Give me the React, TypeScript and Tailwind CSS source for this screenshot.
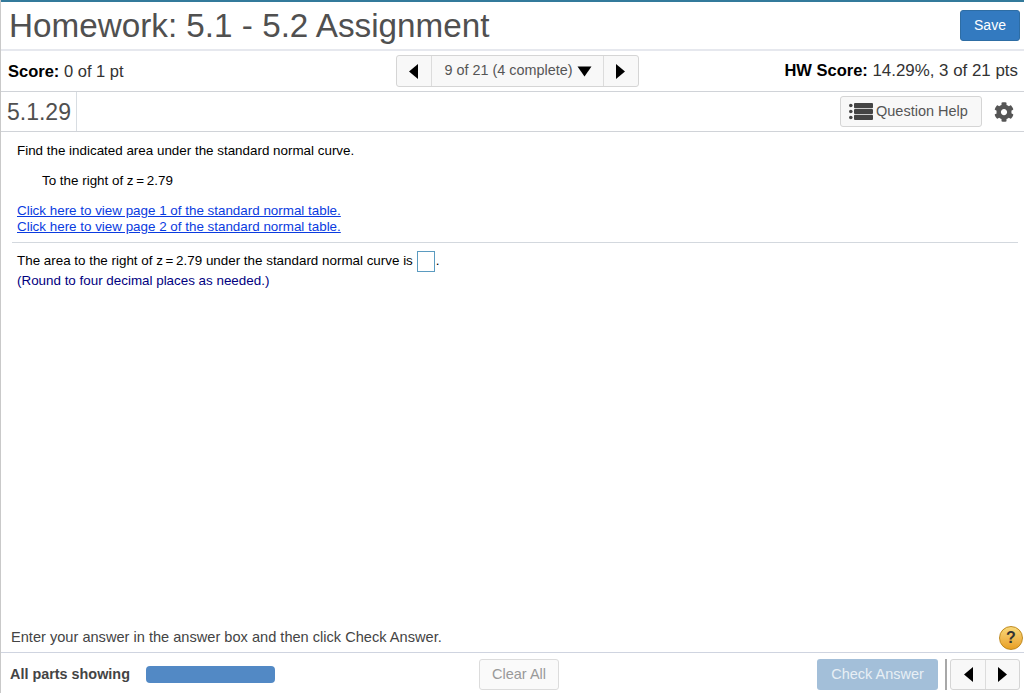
import { FaCog } from "react-icons/fa";

function Tri({ dir }: { dir: "left" | "right" | "down" }) {
  if (dir === "down") {
    return (
      <svg width="15" height="11" viewBox="0 0 15 11">
        <path d="M0.5 0.5H14.5L7.5 10.5Z" fill="#000" />
      </svg>
    );
  }
  return (
    <svg width="9" height="15" viewBox="0 0 9 15">
      <path d={dir === "left" ? "M9 0V15L0 7.5Z" : "M0 0V15L9 7.5Z"} fill="#000" />
    </svg>
  );
}

function ListIcon() {
  return (
    <svg width="24" height="17" viewBox="0 0 24 17" fill="#444">
      <circle cx="1.8" cy="2.5" r="1.8" />
      <circle cx="1.8" cy="8.5" r="1.8" />
      <circle cx="1.8" cy="14.5" r="1.8" />
      <rect x="5" y="0" width="19" height="5.2" rx="1" />
      <rect x="5" y="5.9" width="19" height="5.2" rx="1" />
      <rect x="5" y="11.8" width="19" height="5.2" rx="1" />
    </svg>
  );
}

function Links() {
  return (
    <div className="ml-[16px] mt-[14px] text-[13.4px] leading-[16px] text-[#0a3be0] underline">
      <div>Click here to view page 1 of the standard normal table.</div>
      <div>Click here to view page 2 of the standard normal table.</div>
    </div>
  );
}

export default function App() {
  return (
    <div className="h-[693px] w-[1024px] overflow-hidden flex flex-col bg-white border-l border-[#c9c9c9] font-['Liberation_Sans',Arial,sans-serif]">
      <div className="h-[2px] bg-[#337a9b] shrink-0" />

      <div className="h-[47px] shrink-0 flex items-center justify-between pl-2 pr-[4px]">
        <h1 className="text-[33.25px] leading-[40px] text-[#505050]">Homework: 5.1 - 5.2 Assignment</h1>
        <button className="h-[31px] w-[60px] rounded-[3px] bg-[#337ac0] border border-[#2e6da4] text-white text-[14px]">
          Save
        </button>
      </div>
      <div className="h-[2px] bg-[#e6e8ee] shrink-0" />

      <div className="h-[41px] shrink-0 grid grid-cols-[1fr_auto_1fr] items-center pl-[7px] pr-[6px] border-b border-[#d0d3d8]">
        <div className="text-[16.5px] text-[#333]">
          <span className="font-bold text-black">Score:</span> 0 of 1 pt
        </div>
        <div className="ml-[8px] flex h-[32px] rounded-[3px] border border-[#d5d5d5] bg-[#f8f8f8] text-[14.4px] text-[#555]">
          <div className="w-[35px] flex items-center justify-center border-r border-[#dcdcdc]">
            <Tri dir="left" />
          </div>
          <div className="w-[172px] flex items-center gap-[5px] pl-[13px] border-r border-[#dcdcdc] whitespace-nowrap">
            9 of 21 (4 complete)
            <Tri dir="down" />
          </div>
          <div className="w-[34px] flex items-center justify-center">
            <Tri dir="right" />
          </div>
        </div>
        <div className="text-[16.5px] text-[#333] text-right">
          <span className="font-bold text-black">HW Score:</span> <span className="text-[16.9px]">14.29%, 3 of 21 pts</span>
        </div>
      </div>

      <div className="h-[40px] shrink-0 flex items-center justify-between border-b border-[#d0d3d8]">
        <div className="h-full pt-px flex items-center pl-[6px] pr-[5px] border-r border-[#d8dde2] text-[23px] text-[#505050]">
          5.1.29
        </div>
        <div className="flex items-center">
          <button className="h-[31px] w-[142px] flex items-center gap-[3px] pl-[8px] rounded-[3px] border border-[#d5d5d5] bg-[#f8f8f8] text-[14.5px] text-[#555]">
            <ListIcon />
            Question Help
          </button>
          <div className="w-[42px] pl-[2px] flex justify-center">
            <FaCog size={20} color="#555" />
          </div>
        </div>
      </div>

      <div className="flex-1 relative text-black">
        <div className="ml-[16px] mt-[11px] text-[13.4px] leading-[16px]">Find the indicated area under the standard normal curve.</div>
        <div className="ml-[41px] mt-[14px] text-[13.4px] leading-[16px]">To the right of z{"\u2009"}={"\u2009"}2.79</div>
        <Links />
        <div className="ml-[11px] mr-[6px] mt-[7px] h-px bg-[#d3d8de]" />
        <div className="ml-[16px] mt-[7px] flex items-center h-[22px] text-[13.4px]">
          The area to the right of z{"\u2009"}={"\u2009"}2.79 under the standard normal curve is
          <span className="ml-[4px] h-[21px] w-[18px] border border-[#5b9bc0] inline-block" />
          <span className="ml-[1px]">.</span>
        </div>
        <div className="ml-[16px] mt-[-1px] pt-[2px] text-[13.4px] leading-[16px] text-[#000080]">(Round to four decimal places as needed.)</div>
      </div>

      <div className="h-[41px] shrink-0 flex items-end justify-between pl-[10px] pr-[1px] pb-[2px] border-b border-[#cfd4e0]">
        <div className="text-[14.6px] text-[#444] pb-[1px]">Enter your answer in the answer box and then click Check Answer.</div>
        <div className="h-[24px] w-[24px] rounded-full bg-gradient-to-b from-[#f8d878] to-[#e8a020] border border-[#c08a20] flex items-center justify-center text-[16px] font-bold text-[#333]">
          ?
        </div>
      </div>

      <div className="h-[40px] shrink-0 flex items-center pl-[9px] pr-[4px] pt-[3px]">
        <div className="w-[136px] text-[14.4px] font-bold text-[#444]">All parts showing</div>
        <div className="h-[17px] w-[129px] rounded-[4px] bg-[#5289c5]" />
        <button className="ml-[204px] h-[31px] w-[80px] rounded-[3px] border border-[#dcdcdc] bg-[#fafafa] text-[14.5px] text-[#999]">
          Clear All
        </button>
        <button className="ml-auto h-[31px] w-[121px] rounded-[3px] bg-[#a3bfd9] text-[14.5px] text-[#e8eff5]">
          Check Answer
        </button>
        <div className="ml-[7px] mr-[3px] w-[2px] h-[31px] bg-[#a8a8a8]" />
        <div className="flex h-[31px] rounded-[3px] border border-[#d5d5d5] bg-[#f8f8f8]">
          <div className="w-[35px] flex items-center justify-center border-r border-[#dcdcdc]">
            <Tri dir="left" />
          </div>
          <div className="w-[33px] flex items-center justify-center">
            <Tri dir="right" />
          </div>
        </div>
      </div>
    </div>
  );
}
